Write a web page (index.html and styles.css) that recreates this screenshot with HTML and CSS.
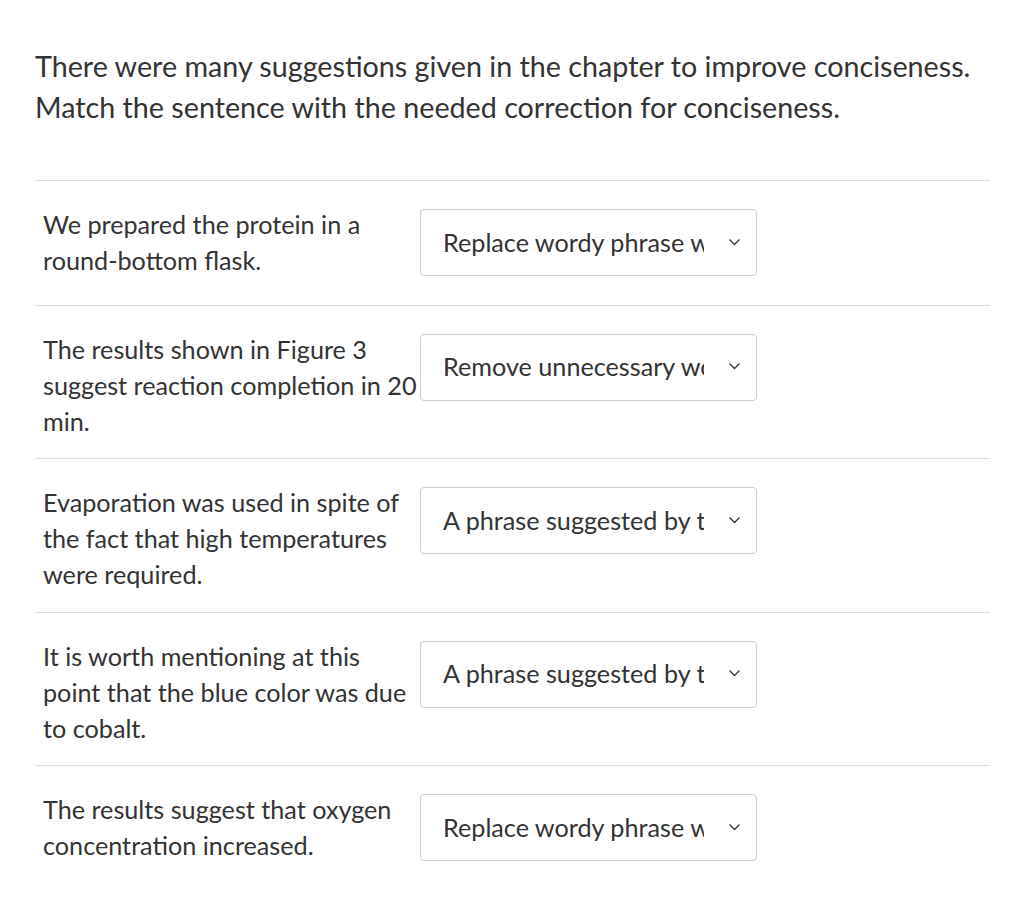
FILE: index.html
```html
<!DOCTYPE html>
<html>
<head>
<meta charset="utf-8">
<link rel="stylesheet" href="styles.css">
</head>
<body>
<div class="page">
  <p class="prompt">There were many suggestions given in the chapter to improve conciseness. Match the sentence with the needed correction for conciseness.</p>
  <div class="rows">
    <div class="row">
      <div class="stem">We prepared the protein in a round-bottom flask.</div>
      <div class="select"><span class="value">Replace wordy phrase with one word</span><svg class="chev" viewBox="0 0 12 8"><path d="M1 1.5 L6 6.5 L11 1.5" /></svg></div>
    </div>
    <div class="row">
      <div class="stem">The results shown in Figure 3 suggest reaction completion in&nbsp;20 min.</div>
      <div class="select"><span class="value">Remove unnecessary words</span><svg class="chev" viewBox="0 0 12 8"><path d="M1 1.5 L6 6.5 L11 1.5" /></svg></div>
    </div>
    <div class="row">
      <div class="stem">Evaporation was used in spite of the fact that high temperatures were required.</div>
      <div class="select"><span class="value">A phrase suggested by the chapter</span><svg class="chev" viewBox="0 0 12 8"><path d="M1 1.5 L6 6.5 L11 1.5" /></svg></div>
    </div>
    <div class="row">
      <div class="stem">It is worth mentioning at this point that the blue color was due to cobalt.</div>
      <div class="select"><span class="value">A phrase suggested by the chapter</span><svg class="chev" viewBox="0 0 12 8"><path d="M1 1.5 L6 6.5 L11 1.5" /></svg></div>
    </div>
    <div class="row">
      <div class="stem">The results suggest that oxygen concentration increased.</div>
      <div class="select"><span class="value">Replace wordy phrase with one word</span><svg class="chev" viewBox="0 0 12 8"><path d="M1 1.5 L6 6.5 L11 1.5" /></svg></div>
    </div>
  </div>
</div>
</body>
</html>
```

FILE: styles.css
```css
html, body {
  margin: 0;
  padding: 0;
  background: #ffffff;
}

body {
  font-family: Lato, "Open Sans", "Liberation Sans", sans-serif;
  color: #333333;
}

.page {
  padding: 46px 34px 0 35px;
}

.prompt {
  margin: 0 0 52px 0;
  font-size: 28.7px;
  line-height: 41px;
}

.rows {
  display: flex;
  flex-direction: column;
}

.row {
  display: flex;
  align-items: flex-start;
  border-top: 1px solid #dcdcdc;
  padding: 25px 8px 19.5px 8px;
}

.stem {
  width: 377px;
  flex: none;
  font-size: 25.2px;
  line-height: 36px;
}

.select {
  flex: none;
  box-sizing: border-box;
  width: 337px;
  height: 67px;
  margin: 3px 0 9px 0;
  border: 1px solid #c8cdd1;
  border-radius: 4px;
  background: #ffffff;
  display: flex;
  align-items: center;
  padding: 0 0 2px 22px;
}

.value {
  width: 261px;
  overflow: hidden;
  white-space: nowrap;
  font-size: 25.2px;
  line-height: 30px;
  color: #333333;
}

.chev {
  width: 13px;
  height: 8px;
  margin-left: 24px;
  fill: none;
  stroke: #333333;
  stroke-width: 1.3;
}
```
